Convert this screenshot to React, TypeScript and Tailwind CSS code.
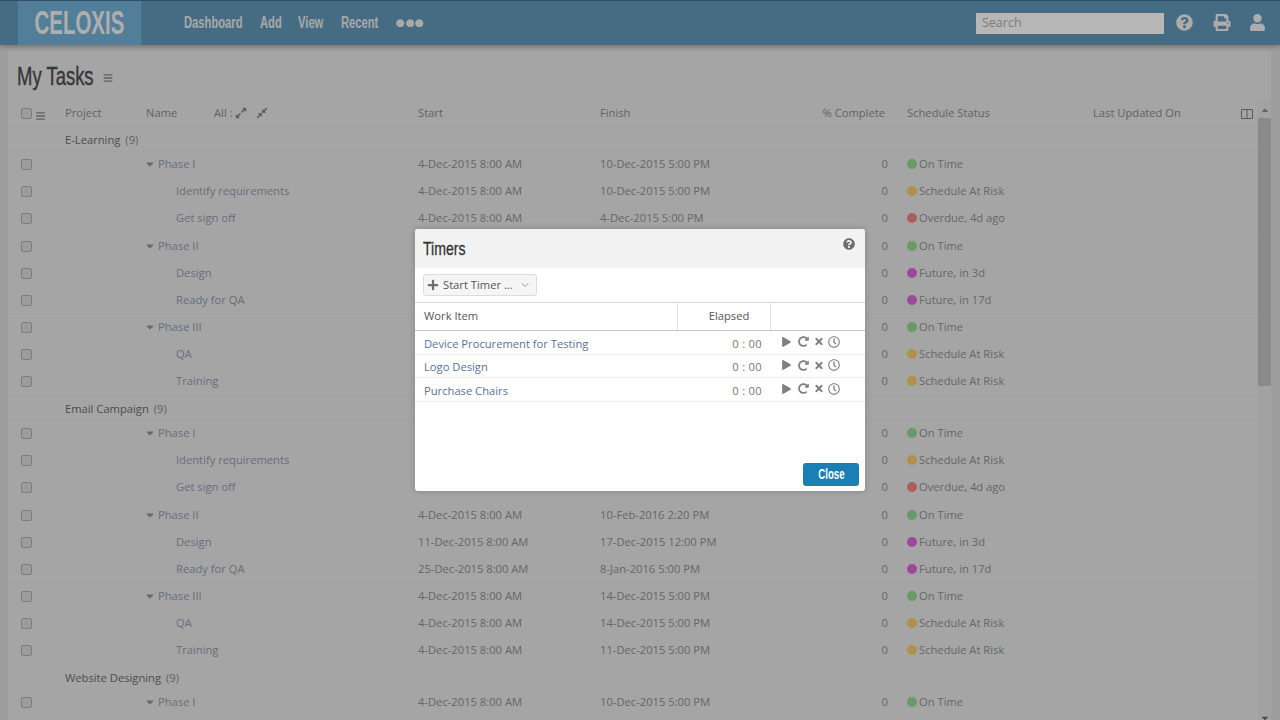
import React from "react";
import { FaQuestionCircle, FaPrint, FaUser, FaPlay, FaRedoAlt, FaTimes, FaRegClock, FaPlus, FaCaretDown, FaCaretUp, FaBars, FaExpandAlt, FaCompressAlt, FaCircle } from "react-icons/fa";
import { ChevronDown } from "lucide-react";

type Status = "ontime" | "risk" | "over" | "f3" | "f17";
const st: Record<Status, [string, string]> = {
  ontime: ["bg-[#8ccb8c]", "On Time"],
  risk: ["bg-[#e8c264]", "Schedule At Risk"],
  over: ["bg-[#e67c7c]", "Overdue, 4d ago"],
  f3: ["bg-[#d062d0]", "Future, in 3d"],
  f17: ["bg-[#d062d0]", "Future, in 17d"],
};

type Row = { k: "g" | "p" | "t"; n: string; s?: string; f?: string; st?: Status; h: string };
const d = "4-Dec-2015 8:00 AM";
const rows: Row[] = [
  { k: "g", n: "E-Learning", h: "h-[24px] pt-[1px]" },
  { k: "p", n: "Phase I", s: d, f: "10-Dec-2015 5:00 PM", st: "ontime", h: "h-[27px] pb-[1px]" },
  { k: "t", n: "Identify requirements", s: d, f: "10-Dec-2015 5:00 PM", st: "risk", h: "h-[27px]" },
  { k: "t", n: "Get sign off", s: d, f: "4-Dec-2015 5:00 PM", st: "over", h: "h-[28px] pb-[1px]" },
  { k: "p", n: "Phase II", s: d, f: "10-Feb-2016 2:20 PM", st: "ontime", h: "h-[27px] pb-[1px]" },
  { k: "t", n: "Design", s: "11-Dec-2015 8:00 AM", f: "17-Dec-2015 12:00 PM", st: "f3", h: "h-[27px]" },
  { k: "t", n: "Ready for QA", s: "25-Dec-2015 8:00 AM", f: "8-Jan-2016 5:00 PM", st: "f17", h: "h-[27px]" },
  { k: "p", n: "Phase III", s: d, f: "14-Dec-2015 5:00 PM", st: "ontime", h: "h-[27px] pb-[1px]" },
  { k: "t", n: "QA", s: d, f: "14-Dec-2015 5:00 PM", st: "risk", h: "h-[27px]" },
  { k: "t", n: "Training", s: d, f: "11-Dec-2015 5:00 PM", st: "risk", h: "h-[28px] pb-[1px]" },
  { k: "g", n: "Email Campaign", h: "h-[24px] pt-[1px]" },
  { k: "p", n: "Phase I", s: d, f: "10-Dec-2015 5:00 PM", st: "ontime", h: "h-[27px] pb-[1px]" },
  { k: "t", n: "Identify requirements", s: d, f: "10-Dec-2015 5:00 PM", st: "risk", h: "h-[27px]" },
  { k: "t", n: "Get sign off", s: d, f: "4-Dec-2015 5:00 PM", st: "over", h: "h-[28px] pb-[1px]" },
  { k: "p", n: "Phase II", s: d, f: "10-Feb-2016 2:20 PM", st: "ontime", h: "h-[27px] pb-[1px]" },
  { k: "t", n: "Design", s: "11-Dec-2015 8:00 AM", f: "17-Dec-2015 12:00 PM", st: "f3", h: "h-[27px]" },
  { k: "t", n: "Ready for QA", s: "25-Dec-2015 8:00 AM", f: "8-Jan-2016 5:00 PM", st: "f17", h: "h-[27px]" },
  { k: "p", n: "Phase III", s: d, f: "14-Dec-2015 5:00 PM", st: "ontime", h: "h-[27px] pb-[1px]" },
  { k: "t", n: "QA", s: d, f: "14-Dec-2015 5:00 PM", st: "risk", h: "h-[27px]" },
  { k: "t", n: "Training", s: d, f: "11-Dec-2015 5:00 PM", st: "risk", h: "h-[28px] pb-[1px]" },
  { k: "g", n: "Website Designing", h: "h-[24px] pt-[1px]" },
  { k: "p", n: "Phase I", s: d, f: "10-Dec-2015 5:00 PM", st: "ontime", h: "h-[27px] pb-[1px]" },
];

const cond = "inline-block whitespace-nowrap font-['Liberation_Sans',sans-serif]";

function Check() {
  return <span className="block w-[11px] h-[11px] rounded-[2px] border border-[#a8a8a8] bg-[#d0d0d0]" />;
}

function TaskRow({ r }: { r: Row }) {
  if (r.k === "g") {
    return (
      <div className={`${r.h} flex items-center pl-[57px] border-t border-[#d9d9d9] text-[11.2px] text-[#686868]`}>
        {r.n} <span className="ml-[5px] text-[#858585]">(9)</span>
      </div>
    );
  }
  const s = st[r.st as Status];
  return (
    <div className={`${r.h} flex items-center text-[11.2px] text-[#8a8a8a] ${r.k === "p" ? "border-t border-[#d9d9d9]" : ""}`}>
      <div className="w-[138px] pl-[13px] shrink-0"><Check /></div>
      <div className="w-[272px] shrink-0 flex items-center text-[#8a94a6]">
        {r.k === "p" ? (
          <><FaCaretDown className="-ml-[2px] w-[12px] h-[12px] text-[#8c8c8c]" /><span className="ml-[2px]">{r.n}</span></>
        ) : (
          <span className="pl-[30px]">{r.n}</span>
        )}
      </div>
      <div className="w-[182px] shrink-0">{r.s}</div>
      <div className="w-[200px] shrink-0">{r.f}</div>
      <div className="w-[88px] shrink-0 text-right">0</div>
      <div className="pl-[19px] flex items-center">
        <span className={`w-[10px] h-[10px] rounded-full ${s[0]}`} />
        <span className="ml-[2px]">{s[1]}</span>
      </div>
    </div>
  );
}

function DialogRow({ name }: { name: string }) {
  return (
    <div className="flex h-[23.6px] pt-[4px] border-b border-[#ececec] text-[11.2px] items-center">
      <div className="w-[262px] pl-[9px] text-[#5a7396]">{name}</div>
      <div className="w-[85px] text-right text-[#777] tracking-[0.3px]">0 : 00</div>
      <div className="flex items-center text-[#808080] ml-[20px] -mt-[5px]">
        <FaPlay className="w-[9px] h-[10px]" />
        <FaRedoAlt className="w-[11px] h-[11px] ml-[7px]" />
        <FaTimes className="w-[10px] h-[11px] ml-[5px]" />
        <FaRegClock className="w-[12px] h-[12px] ml-[4px]" />
      </div>
    </div>
  );
}

export default function App() {
  return (
    <div className="relative h-screen overflow-hidden bg-[#d3d3d3] font-['Open_Sans',sans-serif]">
      <header className="h-[45px] flex items-center bg-[#5c90ae] border-t border-[#3f6d88] shadow-[0_2px_4px_rgba(0,0,0,0.25)]">
        <div className="ml-[18px] w-[123px] h-full flex items-center justify-center bg-[#6fa9cc] text-[#e8e8e8] text-[33px] font-bold">
          <span className={`${cond} scale-x-[0.62]`}>CELOXIS</span>
        </div>
        <nav className="ml-[43px] -mt-[2px] flex items-center text-[16px] font-bold text-[#e0e0e0]">
          <span className="w-[76px]"><span className={`${cond} origin-left scale-x-[0.7]`}>Dashboard</span></span>
          <span className="w-[38px]"><span className={`${cond} origin-left scale-x-[0.7]`}>Add</span></span>
          <span className="w-[43px]"><span className={`${cond} origin-left scale-x-[0.7]`}>View</span></span>
          <span className="w-[55px]"><span className={`${cond} origin-left scale-x-[0.7]`}>Recent</span></span>
          <span className="flex gap-[1px] mt-[2px]">
            <FaCircle className="w-[8.5px] h-[8.5px]" />
            <FaCircle className="w-[8.5px] h-[8.5px]" />
            <FaCircle className="w-[8.5px] h-[8.5px]" />
          </span>
        </nav>
        <div className="ml-auto mr-[116px] w-[188px] h-[21px] bg-[#f4f4f4] flex items-center pl-[6px] text-[12.5px] text-[#a8a8a8]">Search</div>
        <div className="absolute right-0 top-[14px] w-[116px] text-[#e6e6e6]">
          <FaQuestionCircle className="absolute left-[12px] top-0 w-[17px] h-[17px]" />
          <FaPrint className="absolute left-[49px] top-0 w-[18px] h-[17px]" />
          <FaUser className="absolute left-[86px] top-0 w-[15px] h-[17px]" />
        </div>
      </header>

      <main className="ml-[8px] mr-[9px] h-[675px] mt-[6px] bg-[#dcdcdc] flex flex-col">
        <div className="h-[49px] flex items-center pl-[9px] shrink-0">
          <span className="w-[76px] text-[26px] text-[#4a4a4a]"><span className={`${cond} origin-left scale-x-[0.71] [-webkit-text-stroke:0.4px_#4a4a4a]`}>My Tasks</span></span>
          <FaBars className="ml-[10px] mt-[5px] w-[10px] h-[10px] text-[#808080]" />
        </div>
        <div className="flex flex-1 min-h-0">
          <div className="flex-1 min-w-0">
            <div className="h-[27px] flex items-center text-[11.2px] text-[#858585]">
              <div className="w-[57px] pl-[13px] flex items-center shrink-0">
                <Check />
                <FaBars className="ml-[3px] mt-[5px] w-[11px] h-[10px] text-[#808080]" />
              </div>
              <div className="w-[81px] shrink-0">Project</div>
              <div className="w-[272px] shrink-0 flex items-center">
                <span className="w-[68px]">Name</span>
                <span className="w-[21px]">All :</span>
                <FaExpandAlt className="w-[12px] h-[12px] text-[#808080]" />
                <FaCompressAlt className="ml-[9px] w-[12px] h-[12px] text-[#808080]" />
              </div>
              <div className="w-[182px] shrink-0">Start</div>
              <div className="w-[200px] shrink-0">Finish</div>
              <div className="w-[88px] shrink-0 text-right -ml-[3px] whitespace-nowrap">% Complete</div>
              <div className="w-[208px] pl-[22px] shrink-0">Schedule Status</div>
              <div className="flex-1">Last Updated On</div>
              <svg viewBox="0 0 12 12" className="w-[12px] h-[12px] mr-[5px] text-[#7a7a7a]" fill="none" stroke="currentColor"><path d="M.5 1.5h11v9H.5zM6 1.5v9" /></svg>
            </div>
            {rows.map((r, i) => <TaskRow key={i} r={r} />)}
          </div>
          <div className="w-[13px] shrink-0 flex flex-col items-center bg-[#d8d8d8]">
            <FaCaretUp className="w-[10px] h-[10px] text-[#888] mt-[5px]" />
            <div className="w-[13px] h-[268px] mt-[3px] bg-[#b8b8b8]" />
            <div className="flex-1" />
            <FaCaretDown className="w-[10px] h-[10px] text-[#666] mb-[3px]" />
          </div>
        </div>
      </main>

      <div className="absolute inset-0 bg-black/25 flex items-center justify-center">
        <div className="relative w-[450px] h-[262px] bg-white rounded-[3px] flex flex-col shadow-[0_0_6px_rgba(0,0,0,0.2)]">
          <div className="h-[39px] bg-[#f2f2f2] rounded-t-[3px] flex items-center pl-[8px] pt-[2px] shrink-0 text-[19px] text-[#333]">
            <span className={`${cond} origin-left scale-x-[0.74] [-webkit-text-stroke:0.3px_#333]`}>Timers</span>
          </div>
          <FaQuestionCircle className="absolute right-[10px] top-[9px] w-[12px] h-[12px] text-[#6e6e6e]" />
          <div className="h-[34px] flex items-center pl-[8px] shrink-0">
            <div className="w-[114px] h-[22px] bg-[#f5f5f5] border border-[#dcdcdc] rounded-[3px] flex items-center pl-[3px] text-[11.2px] text-[#555]">
              <FaPlus className="w-[12px] h-[12px] text-[#6e6e6e]" />
              <span className="ml-[4px] whitespace-nowrap">Start Timer ...</span>
              <ChevronDown className="w-[12px] h-[12px] ml-[6px] text-[#999]" />
            </div>
          </div>
          <div className="h-[29px] flex items-center border-y border-[#d8d8d8] border-b-[#c4c4c4] text-[11.2px] text-[#555] shrink-0">
            <div className="w-[262px] pl-[9px] h-full flex items-center">Work Item</div>
            <div className="w-[94px] pl-[10px] h-full flex items-center justify-center border-x border-[#e2e2e2]">Elapsed</div>
          </div>
          <DialogRow name="Device Procurement for Testing" />
          <DialogRow name="Logo Design" />
          <DialogRow name="Purchase Chairs" />
          <div className="mt-auto mb-[5px] mr-[6px] self-end">
            <div className="w-[56px] h-[23px] rounded-[3px] bg-[#197fb5] flex items-center justify-center text-white text-[15px] font-bold">
              <span className={`${cond} scale-x-[0.64]`}>Close</span>
            </div>
          </div>
        </div>
      </div>
    </div>
  );
}
